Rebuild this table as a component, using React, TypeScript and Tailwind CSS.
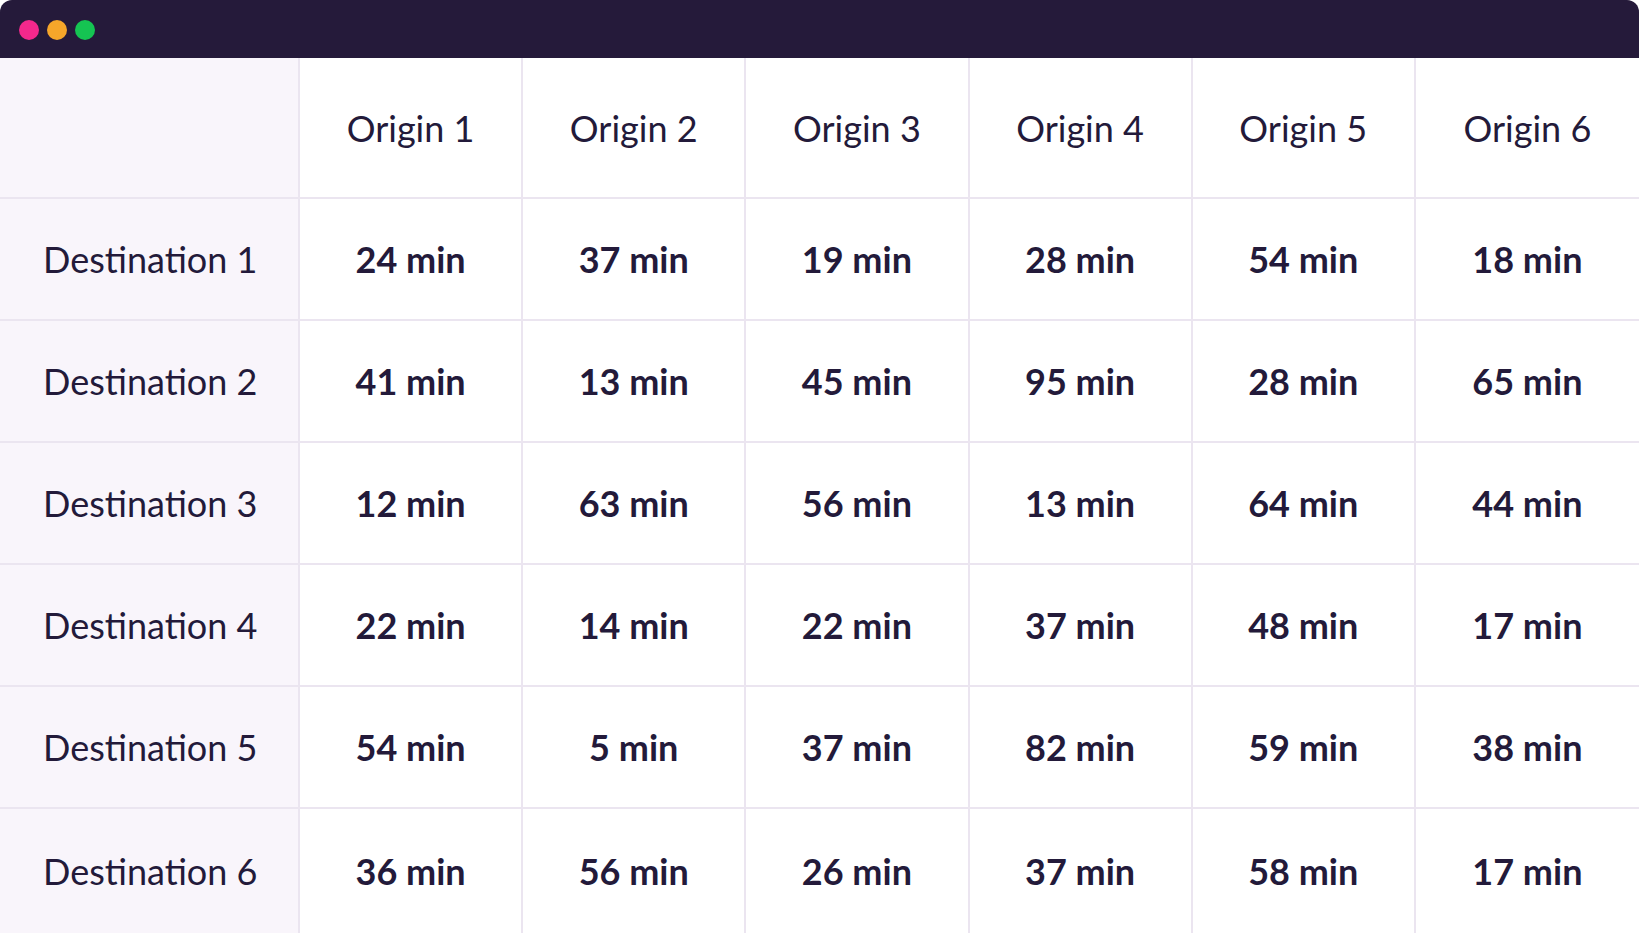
const origins = ["Origin 1", "Origin 2", "Origin 3", "Origin 4", "Origin 5", "Origin 6"];

const rows = [
  { name: "Destination 1", times: [24, 37, 19, 28, 54, 18] },
  { name: "Destination 2", times: [41, 13, 45, 95, 28, 65] },
  { name: "Destination 3", times: [12, 63, 56, 13, 64, 44] },
  { name: "Destination 4", times: [22, 14, 22, 37, 48, 17] },
  { name: "Destination 5", times: [54, 5, 37, 82, 59, 38] },
  { name: "Destination 6", times: [36, 56, 26, 37, 58, 17] },
];

export default function App() {
  return (
    <div className="w-[1639px] h-[933px] overflow-hidden bg-white text-[#231a3a] font-['Lato',sans-serif]">
      {/* window bar */}
      <div className="h-[58px] bg-[#251a3a] rounded-t-[12px] flex items-center gap-2 pl-[19px] pt-[2px]">
        <span className="w-5 h-5 rounded-full bg-[#f4288c]" />
        <span className="w-5 h-5 rounded-full bg-[#f6a62a]" />
        <span className="w-5 h-5 rounded-full bg-[#15c452]" />
      </div>

      <div className="grid grid-cols-[300px_repeat(6,1fr)]">
        {/* header */}
        <div className="h-[141px] bg-[#f9f5fb] border-r-2 border-b-2 border-[#ebe5f0]" />
        {origins.map((o, i) => (
          <div
            key={o}
            className={`h-[141px] flex items-center justify-center text-[36px] border-b-2 border-[#ebe5f0] ${i < 5 ? "border-r-2" : ""}`}
          >
            {o}
          </div>
        ))}

        {rows.map((r, ri) => {
          const last = ri === rows.length - 1;
          return (
            <>
              <div
                key={r.name}
                className={`bg-[#f9f5fb] flex items-center pl-[43px] text-[36px] border-r-2 border-[#ebe5f0] ${last ? "h-[124px]" : "h-[122px] border-b-2"}`}
              >
                {r.name}
              </div>
              {r.times.map((t, i) => (
                <div
                  key={r.name + i}
                  className={`flex items-center justify-center text-[36px] font-bold border-[#ebe5f0] ${last ? "h-[124px]" : "h-[122px] border-b-2"} ${i < 5 ? "border-r-2" : ""}`}
                >
                  {t} min
                </div>
              ))}
            </>
          );
        })}
      </div>
    </div>
  );
}
